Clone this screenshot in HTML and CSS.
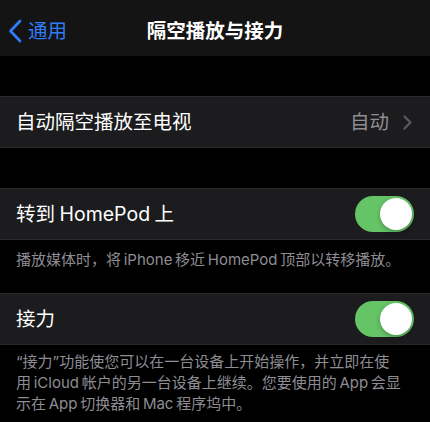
FILE: index.html
```html
<!DOCTYPE html>
<html lang="zh-CN">
<head>
<meta charset="utf-8">
<link rel="stylesheet" href="styles.css">
</head>
<body>
<header class="nav">
  <div class="back">
    <svg class="back-chev" width="14" height="24" viewBox="0 0 14 24"><path d="M12 2 L2.5 12 L12 22" fill="none" stroke="#2f7cf6" stroke-width="2.8" stroke-linecap="round" stroke-linejoin="round"/></svg>
    <span class="back-label">通用</span>
  </div>
  <h1 class="title">隔空播放与接力</h1>
</header>

<section class="group">
  <div class="row">
    <span class="label">自动隔空播放至电视</span>
    <span class="value">自动</span>
    <svg class="chev" width="9" height="15" viewBox="0 0 9 15"><path d="M1.5 1.5 L7.5 7.5 L1.5 13.5" fill="none" stroke="#5b5b60" stroke-width="2.2" stroke-linecap="round" stroke-linejoin="round"/></svg>
  </div>
</section>

<section class="group group-next">
  <div class="row">
    <span class="label">转到 HomePod 上</span>
    <span class="toggle"><span class="knob"></span></span>
  </div>
</section>
<p class="footer footer-one">播放媒体时，将 iPhone 移近 HomePod 顶部以转移播放。</p>

<section class="group">
  <div class="row">
    <span class="label">接力</span>
    <span class="toggle"><span class="knob"></span></span>
  </div>
</section>
<p class="footer footer-two">“接力”功能使您可以在一台设备上开始操作，并立即在使<br>用 iCloud 帐户的另一台设备上继续。您要使用的 App 会显<br>示在 App 切换器和 Mac 程序坞中。</p>
</body>
</html>
```

FILE: styles.css
```css
* { box-sizing: border-box; }
html, body { margin: 0; padding: 0; }
body {
  background: #000;
  width: 430px;
  height: 422px;
  overflow: hidden;
  font-family: "Inter", "Noto Sans CJK SC", sans-serif;
  color: #fff;
}
.nav {
  position: relative;
  height: 56px;
  background: #141414;
  display: flex;
  align-items: center;
  padding-top: 6px;
}
.back {
  display: flex;
  align-items: center;
  padding-left: 8px;
  gap: 6px;
  color: #2f7cf6;
  font-size: 19.5px;
  line-height: 24px;
}
.back-chev { display: block; }
.title {
  position: absolute;
  left: 0;
  right: 0;
  top: 6px;
  bottom: 0;
  margin: 0;
  display: flex;
  align-items: center;
  justify-content: center;
  font-size: 19.5px;
  font-weight: 600;
  line-height: 24px;
  pointer-events: none;
}
.group {
  margin-top: 40px;
  background: #1c1c1e;
  border-top: 1px solid #2a2a2c;
  border-bottom: 1px solid #2a2a2c;
}
.footer + .group { margin-top: 0; }
.row {
  height: 50px;
  display: flex;
  align-items: center;
  padding: 0 16px;
}
.label {
  flex: 1;
  font-size: 19.5px;
  line-height: 24px;
  word-spacing: -1px;
}
.value {
  color: #8e8e93;
  font-size: 19.5px;
  line-height: 24px;
  margin-right: 14px;
}
.chev { display: block; margin-right: 2px; }
.toggle {
  width: 59px;
  height: 36px;
  border-radius: 18px;
  background: #65c466;
  position: relative;
  flex: none;
}
.knob {
  position: absolute;
  right: 2px;
  top: 2px;
  width: 32px;
  height: 32px;
  border-radius: 50%;
  background: #fff;
  box-shadow: 0 2px 5px rgba(0,0,0,0.25);
}
.footer {
  margin: 0;
  color: #8d8d93;
  font-size: 15px;
  line-height: 21px;
  padding: 9px 8px 0 16px;
  word-spacing: -1.5px;
  white-space: nowrap;
}
.footer-one { height: 53px; }
.footer-two { padding-top: 6px; }
```
